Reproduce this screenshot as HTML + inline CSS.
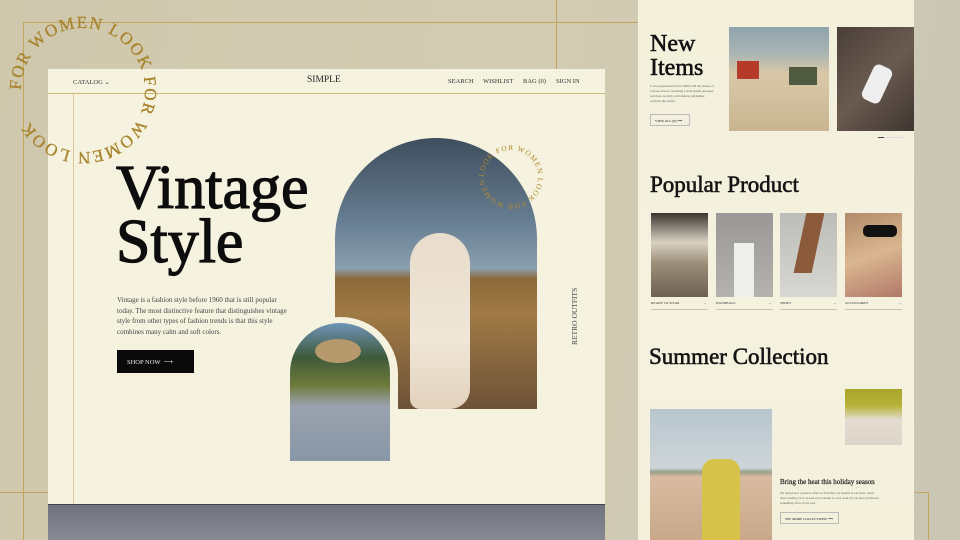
<!DOCTYPE html>
<html><head><meta charset="utf-8"><style>
*{margin:0;padding:0;box-sizing:border-box}
body{width:960px;height:540px;overflow:hidden;position:relative;background:linear-gradient(100deg,#cfc8ad 0%,#d3ccb2 50%,#c9c6b6 100%);font-family:"Liberation Serif",serif;color:#151515}
.abs{position:absolute}
.gl{position:absolute;background:#c2a45c}
.card{position:absolute;left:48px;top:69px;width:557px;height:435px;background:#f5f2df}
.nav{position:absolute;left:0;top:0;width:557px;height:25px;border-bottom:1px solid #d2b97a;font-size:6.5px;color:#333}
.nav span{position:absolute;top:9px;white-space:nowrap}
.panel{position:absolute;left:638px;top:0;width:276px;height:540px;background:linear-gradient(180deg,#f3f0dc,#f4f1df 60%,#f3f0dc)}
.ph{position:absolute}
.lbl{position:absolute;font-size:3.5px;color:#333;top:301px}
.ul{position:absolute;height:1px;background:#c9c4b0;top:309px}
.hd{-webkit-text-stroke:0.6px #151515}
</style></head><body>
<div class="gl" style="left:23px;top:22px;width:1px;height:518px"></div>
<div class="gl" style="left:23px;top:22px;width:615px;height:1px"></div>
<div class="gl" style="left:556px;top:0;width:1px;height:69px"></div>
<div class="gl" style="left:0;top:492px;width:48px;height:1px"></div>
<div class="gl" style="left:914px;top:492px;width:14px;height:1px"></div>
<div class="gl" style="left:928px;top:492px;width:1px;height:48px"></div>

<div class="card">
 <div class="nav">
  <span style="left:25px">CATALOG ⌄</span>
  <span style="left:259px;top:6px;font-size:9.5px;color:#222">SIMPLE</span>
  <span style="left:400px">SEARCH</span>
  <span style="left:435px">WISHLIST</span>
  <span style="left:475px">BAG (0)</span>
  <span style="left:508px">SIGN IN</span>
 </div>
 <div class="gl" style="left:25px;top:25px;width:1px;height:410px;background:#dcc795"></div>
 <div class="abs" style="left:68px;top:92px;font-size:62px;line-height:54px;color:#0d0d0d;-webkit-text-stroke:1.2px #0d0d0d">Vintage<br>Style</div>
 <div class="abs" style="left:69px;top:226px;width:172px;font-size:7px;line-height:10.5px;color:#444">Vintage is a fashion style before 1960 that is still popular today. The most distinctive feature that distinguishes vintage style from other types of fashion trends is that this style combines many calm and soft colors.</div>
 <div class="abs" style="left:69px;top:281px;width:77px;height:23px;background:#0a0a0a;color:#eee;font-size:6.5px;padding:8px 0 0 10px">SHOP NOW &nbsp;⟶</div>
 <div class="ph" style="left:287px;top:69px;width:202px;height:271px;border-radius:101px 101px 0 0;background:linear-gradient(180deg,#3e4e5e 0%,#667c90 30%,#8aa0b0 48%,#8d6a3a 52%,#a07a45 65%,#6e5238 100%);overflow:hidden">
  <div class="abs" style="left:75px;top:95px;width:60px;height:176px;background:linear-gradient(180deg,#e8dccb,#f0e6d8 60%,#e2d2bd);border-radius:30px 30px 20px 10px"></div>
 </div>
 <div class="ph" style="left:236px;top:248px;width:114px;height:150px;border-radius:57px 57px 0 0;background:#f5f2df"></div>
 <div class="ph" style="left:242px;top:254px;width:100px;height:138px;border-radius:50px 50px 0 0;background:linear-gradient(180deg,#6f93b8 0%,#3e5a3a 25%,#6f7a3a 45%,#9aa3ae 60%,#8896a6 100%);overflow:hidden">
  <div class="abs" style="left:25px;top:16px;width:46px;height:24px;border-radius:50%;background:#b69a6e"></div>
 </div>
 <div class="abs" style="left:522px;top:276px;transform:rotate(-90deg);transform-origin:0 0;font-size:7.5px;color:#444;white-space:nowrap">RETRO OUTFITS</div>
 <svg class="abs" style="left:428px;top:73px" width="70" height="70" viewBox="0 0 70 70"><defs><path id="c2" d="M35,35 m-27,0 a27,27 0 1,1 54,0 a27,27 0 1,1 -54,0"/></defs><text font-family="Liberation Serif" font-size="7.5" fill="#b08a2e" letter-spacing="1"><textPath href="#c2">LOOK FOR WOMEN LOOK FOR WOMEN</textPath></text></svg>
</div>
<div class="ph" style="left:48px;top:504px;width:557px;height:36px;background:linear-gradient(180deg,#6f737e,#878a93);border-top:1px solid #444"></div>

<svg class="abs" style="left:8px;top:15px" width="150" height="150" viewBox="0 0 150 150"><defs><path id="c1" d="M75,75 m-62,0 a62,62 0 1,1 124,0 a62,62 0 1,1 -124,0"/></defs><text font-family="Liberation Serif" font-size="17" fill="#a8842c" stroke="#a8842c" stroke-width="0.3" letter-spacing="1.5"><textPath href="#c1">FOR WOMEN LOOK FOR WOMEN LOOK</textPath></text></svg>

<div class="panel">
 <div class="abs hd" style="left:12px;top:32px;font-size:24px;line-height:24px;color:#111">New<br>Items</div>
 <div class="abs" style="left:12px;top:84px;width:66px;font-size:3.2px;line-height:5px;color:#666">It was popularised in the 1960s with the release of Letraset sheets containing Lorem Ipsum passages, and more recently with desktop publishing software like Aldus.</div>
 <div class="abs" style="left:12px;top:114px;width:40px;height:12px;border:1px solid #bbb;font-size:3.5px;padding:3.5px 0 0 4px">VIEW ALL (8) ⟶</div>
 <div class="ph" style="left:91px;top:27px;width:100px;height:104px;background:linear-gradient(180deg,#8fa3ad 0%,#a9b4b3 25%,#d9c8a8 45%,#c9b590 100%)">
  <div class="abs" style="left:8px;top:34px;width:22px;height:18px;background:#b53a2a"></div>
  <div class="abs" style="left:60px;top:40px;width:28px;height:18px;background:#4f5a40"></div>
 </div>
 <div class="ph" style="left:199px;top:27px;width:77px;height:104px;background:linear-gradient(135deg,#4a3f38,#6a5b50 50%,#3f3530)">
  <div class="abs" style="left:30px;top:38px;width:20px;height:38px;background:#eee;border-radius:6px;transform:rotate(25deg)"></div>
 </div>
 <div class="abs" style="left:240px;top:137px;width:25px;height:1px;background:#ddd"></div>
 <div class="abs" style="left:240px;top:137px;width:6px;height:1px;background:#444"></div>
 <div class="abs hd" style="left:12px;top:172px;font-size:23px;color:#151515">Popular Product</div>
 <div class="ph" style="left:13px;top:213px;width:57px;height:84px;background:linear-gradient(180deg,#3b3530,#d9d1c2 35%,#9c8e78 60%,#6c6052)"></div>
 <div class="ph" style="left:78px;top:213px;width:57px;height:84px;background:linear-gradient(180deg,#9a9896,#b4b2ae)"><div class="abs" style="left:18px;top:30px;width:20px;height:54px;background:#eeeeea"></div></div>
 <div class="ph" style="left:142px;top:213px;width:57px;height:84px;background:linear-gradient(180deg,#bcbcb8,#d8d7d2)"><div class="abs" style="left:20px;top:0;width:18px;height:60px;background:#8b5a3a;transform:skew(-12deg)"></div></div>
 <div class="ph" style="left:207px;top:213px;width:57px;height:84px;background:linear-gradient(160deg,#b08a6a,#d9b690 50%,#b27868)"><div class="abs" style="left:18px;top:12px;width:34px;height:12px;background:#111;border-radius:5px"></div></div>
 <span class="lbl" style="left:13px">READY TO WEAR</span><span class="lbl" style="left:78px">HANDBAGS</span><span class="lbl" style="left:142px">SHOES</span><span class="lbl" style="left:207px">ACCESSORIES</span>
 <span class="lbl" style="left:65px">→</span><span class="lbl" style="left:130px">→</span><span class="lbl" style="left:195px">→</span><span class="lbl" style="left:260px">→</span>
 <div class="ul" style="left:13px;width:57px"></div><div class="ul" style="left:78px;width:57px"></div><div class="ul" style="left:142px;width:57px"></div><div class="ul" style="left:207px;width:57px"></div>
 <div class="abs hd" style="left:11px;top:344px;font-size:23px;color:#151515">Summer Collection</div>
 <div class="ph" style="left:12px;top:409px;width:122px;height:131px;background:linear-gradient(180deg,#b8c6cf 0%,#cdd5d8 45%,#9aa08a 48%,#d8bba0 52%,#c9a88a 100%)"><div class="abs" style="left:52px;top:50px;width:38px;height:81px;background:#d7c24a;border-radius:12px 12px 0 0"></div></div>
 <div class="ph" style="left:207px;top:389px;width:57px;height:56px;background:linear-gradient(180deg,#a9a42a 0%,#b7b33a 30%,#e4dcd0 55%,#dcd4c8)"></div>
 <div class="abs" style="left:142px;top:478px;font-size:7px;color:#222;-webkit-text-stroke:0.2px #222">Bring the heat this holiday season</div>
 <div class="abs" style="left:142px;top:491px;width:100px;font-size:3.2px;line-height:5px;color:#666">We design new products when we find they are needed in our lives, rather than creating a new season every month or even week. If you have purchased something off us in the past.</div>
 <div class="abs" style="left:142px;top:512px;width:59px;height:12px;border:1px solid #bbb;font-size:3.5px;padding:3.5px 0 0 4px">SEE MORE COLLECTIONS ⟶</div>
</div>
</body></html>
